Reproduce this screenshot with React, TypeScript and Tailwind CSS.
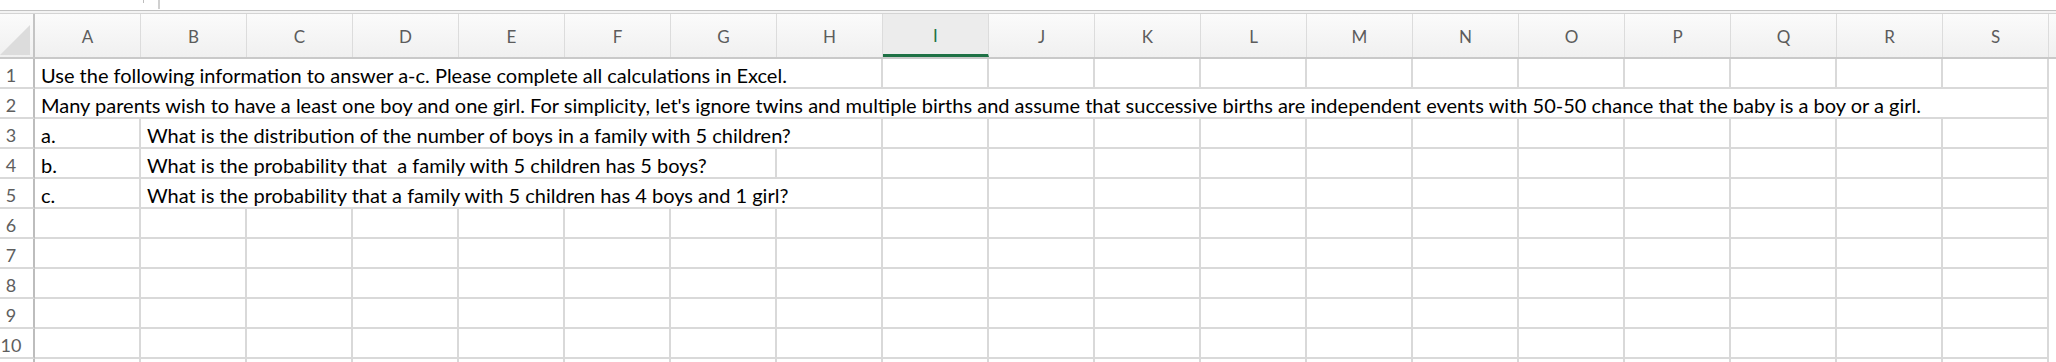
import React from "react";

const COLS = "ABCDEFGHIJKLMNOPQRS".split("");

const spanClass: Record<number, string> = {
  1: "col-span-1",
  6: "col-span-6",
  7: "col-span-7",
  8: "col-span-8",
  19: "col-span-19",
};

type Cell = { span: number; text?: string };

const blanks = (n: number): Cell[] => Array.from({ length: n }, () => ({ span: 1 }));

const rows: Cell[][] = [
  [{ span: 8, text: "Use the following information to answer a-c. Please complete all calculations in Excel." }, ...blanks(11)],
  [
    {
      span: 19,
      text: "Many parents wish to have a least one boy and one girl. For simplicity, let's ignore twins and multiple births and assume that successive births are independent events with 50-50 chance that the baby is a boy or a girl.",
    },
  ],
  [{ span: 1, text: "a." }, { span: 7, text: "What is the distribution of the number of boys in a family with 5 children?" }, ...blanks(11)],
  [{ span: 1, text: "b." }, { span: 6, text: "What is the probability that  a family with 5 children has 5 boys?" }, ...blanks(12)],
  [{ span: 1, text: "c." }, { span: 7, text: "What is the probability that a family with 5 children has 4 boys and 1 girl?" }, ...blanks(11)],
  blanks(19),
  blanks(19),
  blanks(19),
  blanks(19),
  blanks(19),
  blanks(19),
];

const App = () => {
  return (
    <div className="w-[2056px] h-[362px] overflow-hidden bg-white font-['Lato',sans-serif]">
      {/* formula bar remnant */}
      <div className="flex h-[10px]">
        <div className="w-[143px]" />
        <div className="w-px h-[3px] bg-[#bdbdbd]" />
        <div className="w-[14px]" />
        <div className="w-[2px] h-[9px] bg-[#d0d0d0]" />
      </div>
      <div className="h-[4px] border-t border-b border-t-[#c2c2c2] border-b-[#d4d4d4] bg-[#f3f3f3]" />

      {/* column headers */}
      <div className="grid grid-cols-[35px_repeat(19,106px)_1fr] h-[45px] border-b-2 border-[#c9c9c9] bg-gradient-to-b from-[#fbfbfb] to-[#f0f0f0]">
        <div className="relative border-r-2 border-[#c4c4c4]">
          <svg className="absolute left-0 top-0" width="33" height="43">
            <polygon points="0,41 30,41 30,11" fill="#dcdcdc" />
          </svg>
        </div>
        {COLS.map((c) => (
          <div
            key={c}
            className={
              c === "I"
                ? "flex items-center justify-center pt-[3px] border-r border-[#dcdcdc] bg-[#ececec] border-b-[3px] border-b-[#1e7145] text-[#1e7145] text-[17px]"
                : "flex items-center justify-center pt-[3px] border-r border-[#dcdcdc] text-[#5c5c5c] text-[17px]"
            }
          >
            {c}
          </div>
        ))}
        <div />
      </div>

      {/* sheet body */}
      <div className="grid grid-cols-[35px_repeat(19,106px)_1fr] auto-rows-[30px]">
        {rows.map((row, i) => (
          <React.Fragment key={i}>
            <div className="flex items-end justify-center pr-[11px] border-r-2 border-r-[#bdbdbd] border-b-2 border-b-[#d9d9d9] text-[18px] leading-[24px] text-[#5e5e5e]">
              {i < 10 ? i + 1 : ""}
            </div>
            {row.map((cell, j) => (
              <div
                key={j}
                className={`${spanClass[cell.span]} flex items-end pl-[6px] border-r-2 border-b-2 border-[#d9d9d9] text-[20px] leading-[24px] text-black whitespace-pre overflow-hidden`}
              >
                {cell.text ?? ""}
              </div>
            ))}
            <div />
          </React.Fragment>
        ))}
      </div>
    </div>
  );
};

export default App;
